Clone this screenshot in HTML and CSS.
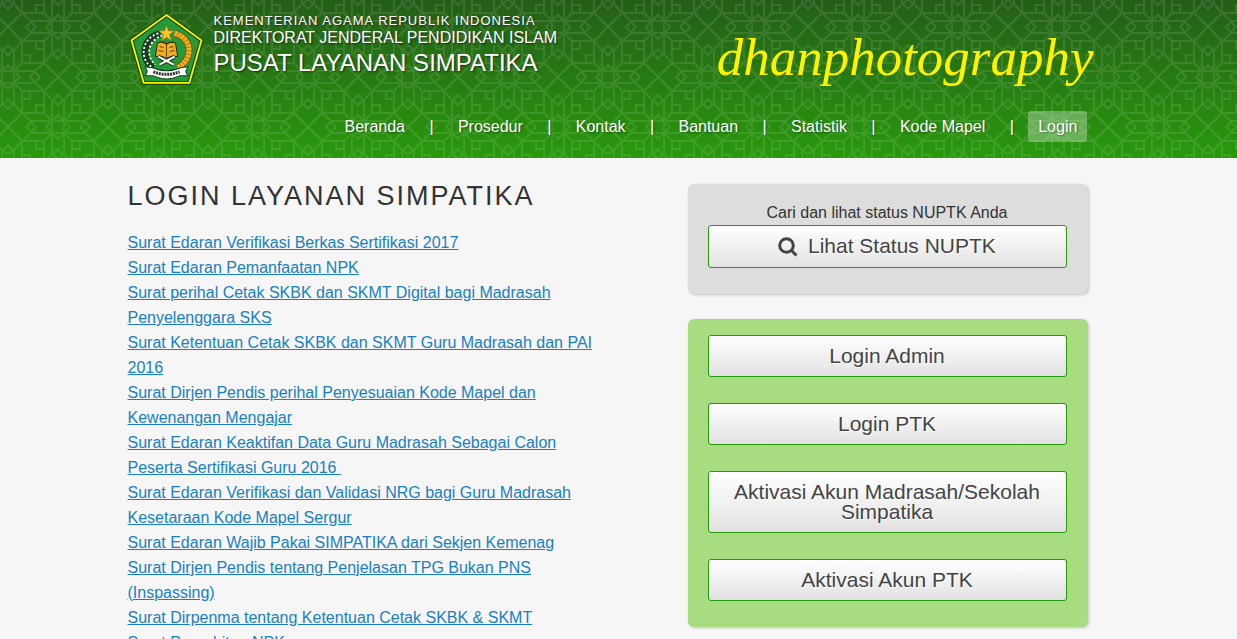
FILE: index.html
```html
<!DOCTYPE html>
<html lang="id">
<head>
<meta charset="utf-8">
<meta name="viewport" content="width=device-width, initial-scale=1">
<title>Login Layanan Simpatika</title>
<link rel="stylesheet" href="styles.css">
</head>
<body>
<header class="site-header">
  <svg class="header-pattern" aria-hidden="true">
    <defs>
      <g id="rosette" fill="none" stroke="#fff" stroke-width="2">
        <path d="M-6-27V27M6-27V27M-27-6H27M-27 6H27"/>
        <path d="M-14-14L-6-6M14-14L6-6M-14 14L-6 6M14 14L6 6M-6-6L0-12L6-6L12 0L6 6L0 12L-6 6L-12 0Z"/>
        <path d="M0-32l5 5-5 5-5-5zM0 22l5 5-5 5-5-5zM-27-5l5 5-5 5-5-5zM27-5l5 5-5 5-5-5z"/>
        <path d="M-36-36h22v22h-22zM14-36h22v22h-22zM-36 14h22v22h-22zM14 14h22v22h-22z"/>
        <path d="M-22-14v-8h8M14-22h8v8M-22 14v8h8M14 22h8v-8"/>
        <path d="M-14-36l8 9M14-36l-8 9M-14 36l8-9M14 36l-8-9M-36-14l9 8M-36 14l9-8M36-14l-9 8M36 14l-9-8"/>
        <path d="M-14-36L0-50L14-36M-14 36L0 50L14 36M-36-14L-50 0L-36 14M36-14L50 0L36 14"/>
      </g>
      <pattern id="lattice" width="100" height="100" patternUnits="userSpaceOnUse">
        <use href="#rosette" x="58" y="27"/>
        <use href="#rosette" x="58" y="127"/>
        <use href="#rosette" x="-42" y="27"/>
        <use href="#rosette" x="8" y="77"/>
        <use href="#rosette" x="108" y="77"/>
        <use href="#rosette" x="8" y="-23"/>
        <use href="#rosette" x="108" y="-23"/>
      </pattern>
    </defs>
    <rect width="100%" height="100%" fill="url(#lattice)"/>
  </svg>
  <div class="container header-inner">
    <div class="masthead">
      <div class="brand">
        <svg class="logo" viewBox="0 0 74 72" role="img" aria-label="Kementerian Agama">
          <path d="M37 2L71.500 27L59.500 69H14.500L2.500 27Z" fill="#259a38" stroke="#184d16" stroke-width="4"/>
          <path d="M37 2L71.500 27L59.500 69H14.500L2.500 27Z" fill="none" stroke="#fff200" stroke-width="1.800"/>
          <path d="M31 20C12 26 12 46 24 54" fill="none" stroke="#173b1d" stroke-width="7"/>
          <path d="M29 20C11 26 11 46 22 53M33 22C17 28 17 43 26 51" fill="none" stroke="#fff" stroke-width="1.800" stroke-dasharray="2 2"/>
          <path d="M45 20C65 26 62 47 48 54" fill="none" stroke="#805b12" stroke-width="7"/>
          <path d="M45 20C65 26 62 47 48 54" fill="none" stroke="#f0ae1d" stroke-width="5" stroke-dasharray="3 .5"/>
          <path d="M37 12l2 5.500h6l-5 3.800 2 6.200-5-3.700-5 3.700 2-6.200-5-3.800h6z" fill="#ffc629" stroke="#8b6517" stroke-width=".6"/>
          <path d="M28 30q5-3 9 1q4-4 9-1l2 13q-7-1-11 2q-4-3-11-2z" fill="#f2ae20" stroke="#322c13"/>
          <path d="M37 31v13M30 33l4 1M29 37l5 1M40 34l4-1M40 38l5-1" stroke="#69450f" fill="none"/>
          <path d="M29 43l15 8M45 43l-15 8" stroke="#153b1b" stroke-width="4"/>
          <path d="M29 43l15 8M45 43l-15 8" stroke="#fff" stroke-width="2"/>
          <path d="M16 53l7 1q14 6 28 0l7-1-2 5 2 4h-8q-13 6-26 0h-8l2-4z" fill="#fff" stroke="#173b1d"/>
          <path d="M24 58q13 5 26 0" fill="none" stroke="#343434" stroke-width="3" stroke-dasharray="2 .8"/>
        </svg>
        <div class="brand-text">
          <span class="ministry">KEMENTERIAN AGAMA REPUBLIK INDONESIA</span>
          <span class="directorate">DIREKTORAT JENDERAL PENDIDIKAN ISLAM</span>
          <span class="service">PUSAT LAYANAN SIMPATIKA</span>
        </div>
      </div>
      <div class="signature">dhanphotography</div>
    </div>
    <nav class="main-nav">
      <a href="#">Beranda</a><span>|</span>
      <a href="#">Prosedur</a><span>|</span>
      <a href="#">Kontak</a><span>|</span>
      <a href="#">Bantuan</a><span>|</span>
      <a href="#">Statistik</a><span>|</span>
      <a href="#">Kode Mapel</a><span>|</span>
      <a class="active" href="#">Login</a>
    </nav>
  </div>
</header>
<main class="container content">
  <section class="notices">
    <h1>LOGIN LAYANAN SIMPATIKA</h1>
    <ul>
      <li><a href="#">Surat Edaran Verifikasi Berkas Sertifikasi 2017</a></li>
      <li><a href="#">Surat Edaran Pemanfaatan NPK</a></li>
      <li><a href="#">Surat perihal Cetak SKBK dan SKMT Digital bagi Madrasah Penyelenggara SKS</a></li>
      <li><a href="#">Surat Ketentuan Cetak SKBK dan SKMT Guru Madrasah dan PAI 2016</a></li>
      <li><a href="#">Surat Dirjen Pendis perihal Penyesuaian Kode Mapel dan Kewenangan Mengajar</a></li>
      <li><a href="#">Surat Edaran Keaktifan Data Guru Madrasah Sebagai Calon Peserta Sertifikasi Guru 2016&nbsp;</a></li>
      <li><a href="#">Surat Edaran Verifikasi dan Validasi NRG bagi Guru Madrasah Kesetaraan Kode Mapel Sergur</a></li>
      <li><a href="#">Surat Edaran Wajib Pakai SIMPATIKA dari Sekjen Kemenag</a></li>
      <li><a href="#">Surat Dirjen Pendis tentang Penjelasan TPG Bukan PNS (Inspassing)</a></li>
      <li><a href="#">Surat Dirpenma tentang Ketentuan Cetak SKBK &amp; SKMT</a></li>
      <li><a href="#">Surat Penerbitan NPK</a></li>
    </ul>
  </section>
  <aside class="sidebar">
    <section class="panel search-panel">
      <p>Cari dan lihat status NUPTK Anda</p>
      <button type="button" class="button">
        <svg class="search-icon" viewBox="0 0 20 20" aria-hidden="true"><circle cx="8.500" cy="8.500" r="6.800"/><path d="M13.500 13.500l5 5"/></svg>
        Lihat Status NUPTK
      </button>
    </section>
    <section class="panel login-panel">
      <button type="button" class="button">Login Admin</button>
      <button type="button" class="button">Login PTK</button>
      <button type="button" class="button">Aktivasi Akun Madrasah/Sekolah Simpatika</button>
      <button type="button" class="button">Aktivasi Akun PTK</button>
    </section>
  </aside>
</main>
</body>
</html>
```
FILE: styles.css
```css
* { box-sizing: border-box; }
html { scrollbar-width: none; }
body {
  margin: 0;
  background: #f6f6f6;
  color: #333;
  font: 16px/25px "Liberation Sans", Arial, sans-serif;
}
.container {
  width: 100%;
  max-width: 1022px;
  margin: 0 auto;
  padding: 0 42px 0 20px;
}
.site-header {
  position: relative;
  background: linear-gradient(#245e18, #29990c);
  color: #fff;
}
.header-pattern {
  position: absolute;
  inset: 0;
  width: 100%;
  height: 100%;
  opacity: .1;
}
.header-inner {
  position: relative;
  padding: 12px 36px 16px 20px;
}
.masthead {
  display: flex;
  justify-content: space-between;
  align-items: flex-start;
  height: 99px;
}
.brand {
  display: flex;
  gap: 10px;
  padding-left: 1px;
}
.logo { width: 75px; height: 73px; margin-top: 1px; }
.brand-text {
  display: flex;
  flex-direction: column;
  text-shadow: 1px 1px 2px rgba(0, 0, 0, .6);
  white-space: nowrap;
}
.ministry { font-size: 13px; line-height: 17px; letter-spacing: 1px; }
.directorate { font-size: 16px; line-height: 17px; }
.service { font-size: 24px; line-height: 34px; }
.signature {
  color: #fff200;
  font: italic 400 53px/90px "Brush Script MT", "Liberation Serif", serif;
}
.main-nav {
  display: flex;
  justify-content: space-between;
  max-width: 753px;
  margin-left: auto;
  padding-right: 6px;
  box-sizing: content-box;
  line-height: 31px;
  text-shadow: 1px 1px 2px rgba(0, 0, 0, .4);
}
.main-nav a {
  padding: 0 10px;
  border-radius: 3px;
  color: #fff;
  text-decoration: none;
}
.main-nav .active { background: rgba(255, 255, 255, .3); }
.content {
  display: grid;
  grid-template-columns: minmax(0, 480px) minmax(0, 400px);
  justify-content: space-between;
  padding-top: 26px;
}
.notices h1 {
  margin: 0 0 22px;
  font-size: 27px;
  line-height: 24px;
  font-weight: 400;
  letter-spacing: 2px;
}
.notices ul { margin: 0; padding: 0; list-style: none; }
.notices a { color: #1a80c4; text-decoration: underline; }
.sidebar { display: flex; flex-direction: column; gap: 25px; }
.panel {
  display: flex;
  flex-direction: column;
  padding: 16px 21px 26px 20px;
  border-radius: 6px;
  box-shadow: 1px 1px 3px rgba(0, 0, 0, .2);
}
.search-panel { background: #ddd; }
.search-panel p { margin: 0; text-align: center; }
.login-panel { gap: 26px; background: #a8dc80; }
.button {
  padding: 10px 20px;
  border: 1px solid #29990c;
  border-radius: 3px;
  background: linear-gradient(#fff, #e2e2e2);
  color: #444;
  font: 21px/20px "Liberation Sans", Arial, sans-serif;
  text-shadow: 1px 1px 1px #fff;
}
.search-icon {
  width: 20px;
  height: 20px;
  margin-right: 4px;
  vertical-align: -4px;
  fill: none;
  stroke: #444;
  stroke-width: 3;
}
```
